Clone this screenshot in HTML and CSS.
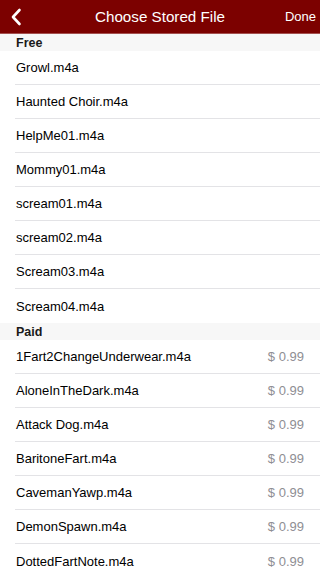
FILE: index.html
```html
<!DOCTYPE html>
<html lang="en">

<head>
    <meta charset="UTF-8">
    <meta name="viewport" content="width=device-width, initial-scale=1.0">
    <title>Choose Stored File</title>
    <link rel="stylesheet" href="styles.css">
</head>

<body>
    <div class="navbar">
        <span class="back">
            <svg width="12" height="18" viewBox="0 0 12 18">
                <path d="M9.5 2 L3 9 L9.5 16" fill="none" stroke="#fff" stroke-width="2.6" stroke-linecap="round" stroke-linejoin="round" />
            </svg>
        </span>
        <span class="title">Choose Stored File</span>
        <span class="done">Done</span>
    </div>

    <div class="section-header">Free</div>
    <ul class="list">
        <li class="row"><span class="name">Growl.m4a</span></li>
        <li class="row"><span class="name">Haunted Choir.m4a</span></li>
        <li class="row"><span class="name">HelpMe01.m4a</span></li>
        <li class="row"><span class="name">Mommy01.m4a</span></li>
        <li class="row"><span class="name">scream01.m4a</span></li>
        <li class="row"><span class="name">scream02.m4a</span></li>
        <li class="row"><span class="name">Scream03.m4a</span></li>
        <li class="row"><span class="name">Scream04.m4a</span></li>
    </ul>

    <div class="section-header">Paid</div>
    <ul class="list">
        <li class="row"><span class="name">1Fart2ChangeUnderwear.m4a</span><span class="price">$ 0.99</span></li>
        <li class="row"><span class="name">AloneInTheDark.m4a</span><span class="price">$ 0.99</span></li>
        <li class="row"><span class="name">Attack Dog.m4a</span><span class="price">$ 0.99</span></li>
        <li class="row"><span class="name">BaritoneFart.m4a</span><span class="price">$ 0.99</span></li>
        <li class="row"><span class="name">CavemanYawp.m4a</span><span class="price">$ 0.99</span></li>
        <li class="row"><span class="name">DemonSpawn.m4a</span><span class="price">$ 0.99</span></li>
        <li class="row"><span class="name">DottedFartNote.m4a</span><span class="price">$ 0.99</span></li>
    </ul>
</body>

</html>
```

FILE: styles.css
```css
body {
    margin: 0;
    background: #fff;
    font-family: "Liberation Sans", Arial, sans-serif;
    color: #000;
    overflow: hidden;
}

.navbar {
    height: 33px;
    background: #7c0100;
    border-bottom: 1px solid #a4504f;
    display: flex;
    align-items: center;
    padding: 0 4px;
    color: #fff;
}

.navbar .back {
    width: 50px;
    padding-left: 6px;
    box-sizing: border-box;
    display: flex;
    align-items: center;
}

.navbar .title {
    font-size: 15.2px;
    flex: 1;
    text-align: center;
}

.navbar .done {
    width: 50px;
    text-align: right;
    font-size: 13px;
}

.section-header {
    height: 17px;
    line-height: 18px;
    background: #f7f7f7;
    padding-left: 16px;
    font-size: 12.5px;
    font-weight: bold;
    color: #1a1a1a;
}

.list {
    list-style: none;
    margin: 0;
    padding: 0 0 0 15px;
}

.row {
    height: 34px;
    display: flex;
    align-items: center;
    justify-content: space-between;
    padding-right: 16px;
    border-bottom: 1px solid #e3e3e6;
    box-sizing: border-box;
    font-size: 13px;
}

.list .row:last-child {
    border-bottom: none;
}

.row .name {
    padding-left: 1px;
}

.row .price {
    color: #8e8e93;
}
```
